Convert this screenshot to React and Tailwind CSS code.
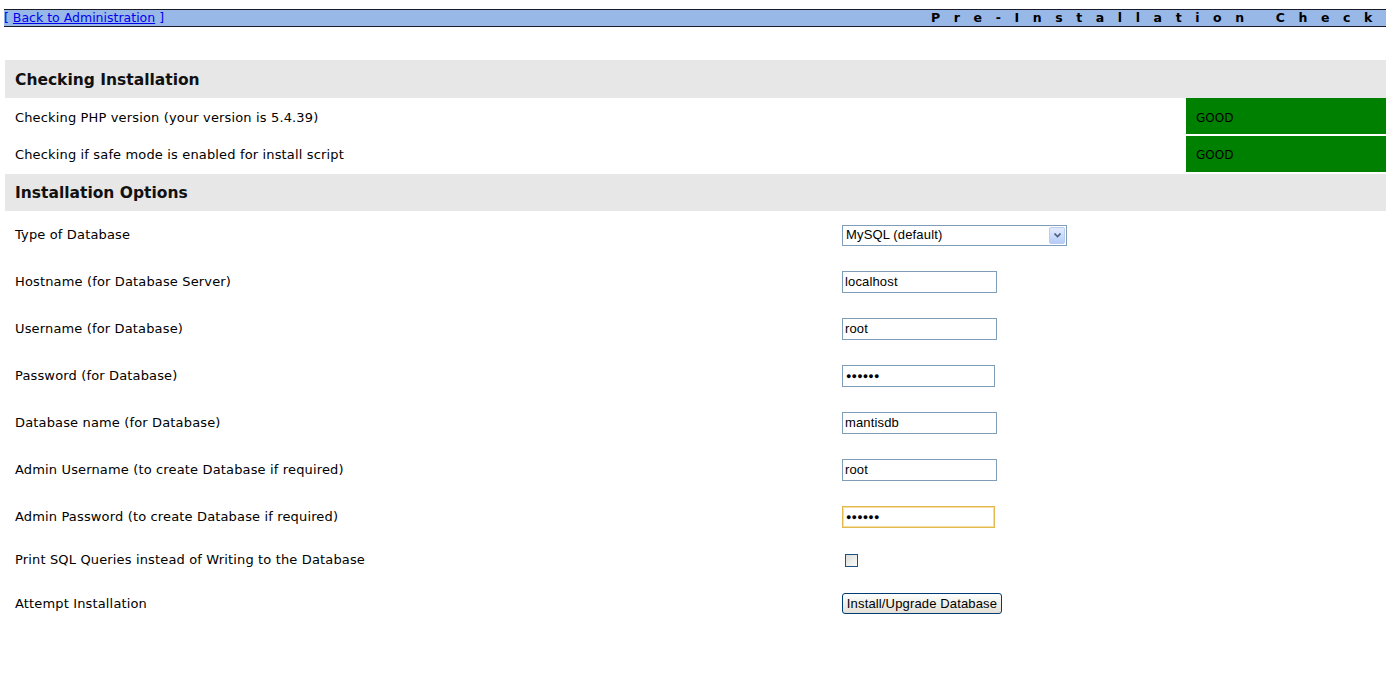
import React from "react";

const optionRows = [
  { label: "Type of Database", kind: "select", h: "h-[47px]" },
  { label: "Hostname (for Database Server)", kind: "text", value: "localhost", h: "h-[47px]" },
  { label: "Username (for Database)", kind: "text", value: "root", h: "h-[47px]" },
  { label: "Password (for Database)", kind: "password", h: "h-[47px]" },
  { label: "Database name (for Database)", kind: "text", value: "mantisdb", h: "h-[47px]" },
  { label: "Admin Username (to create Database if required)", kind: "text", value: "root", h: "h-[47px]" },
  { label: "Admin Password (to create Database if required)", kind: "password", focused: true, h: "h-[47px]" },
  { label: "Print SQL Queries instead of Writing to the Database", kind: "checkbox", h: "h-[39px]" },
  { label: "Attempt Installation", kind: "button", h: "h-[48px]" },
];

function Field({ row }) {
  if (row.kind === "select") {
    return (
      <div className="flex h-[21px] w-[225px] items-center border border-[#7f9db9] bg-white">
        <span className="flex-1 pl-[3px] font-['Liberation_Sans',Arial,sans-serif] text-[13px] text-black">
          MySQL (default)
        </span>
        <span className="mr-[1px] flex h-[17px] w-[16px] items-center justify-center rounded-[2px] border border-[#b9cdf0] bg-gradient-to-b from-[#e3ecfd] to-[#b6cbf6]">
          <svg width="7" height="5" viewBox="0 0 7 5">
            <path d="M0.5 0.5 L3.5 3.5 L6.5 0.5" stroke="#4d6185" strokeWidth="1.6" fill="none" />
          </svg>
        </span>
      </div>
    );
  }
  if (row.kind === "text") {
    return (
      <div className="flex h-[22px] w-[155px] items-center border border-[#7f9db9] bg-white pl-[2px] font-['Liberation_Sans',Arial,sans-serif] text-[13px] text-black">
        {row.value}
      </div>
    );
  }
  if (row.kind === "password") {
    return (
      <div
        className={
          row.focused
            ? "flex h-[22px] w-[153px] items-center border border-[#e3b94f] bg-white pl-[3px] shadow-[inset_0_0_0_1px_#f6df9e]"
            : "flex h-[22px] w-[153px] items-center border border-[#7f9db9] bg-white pl-[3px]"
        }
      >
        <span className="font-['Liberation_Sans',Arial,sans-serif] text-[9px] leading-none text-black">
          ●●●●●●
        </span>
      </div>
    );
  }
  if (row.kind === "checkbox") {
    return (
      <div className="ml-[3px] h-[13px] w-[13px] border border-[#1c5180] bg-gradient-to-br from-[#dcdcd7] to-[#fbfbf9]" />
    );
  }
  return (
    <div className="flex h-[21px] w-[160px] items-center justify-center rounded-[3px] border border-[#003c74] bg-gradient-to-b from-[#fefefe] to-[#e3e1d6] font-['Liberation_Sans',Arial,sans-serif] text-[13px] text-black">
      Install/Upgrade Database
    </div>
  );
}

export default function App() {
  return (
    <div className="min-h-screen bg-white font-['DejaVu_Sans',Verdana,sans-serif] text-[13px] tracking-[0.15px] text-black">
      <div className="pt-[9px] pl-[4px] pr-[9px]">
        {/* top bar */}
        <div className="flex h-[18px] items-center justify-between border-y border-[#1a1a2a] bg-[#98b8e8] pt-[1px]">
          <span className="text-[12.5px] tracking-normal text-[#0000ee]">
            [ <a href="#" className="underline">Back to Administration</a> ]
          </span>
          <span className="text-[12.5px] font-bold tracking-[13.6px] text-black">
            Pre-Installation Check
          </span>
        </div>
      </div>

      <div className="mt-[33px] pl-[5px] pr-[9px]">
        <div className="flex h-[38px] items-center bg-[#e7e7e7] pl-[10px] pt-[3px] text-[15.5px] font-bold tracking-normal text-[#111]">
          Checking Installation
        </div>
        <div className="flex flex-col gap-[2px]">
          <div className="flex h-[36px] items-center">
            <div className="flex-1 pl-[10px] pt-[3px]">Checking PHP version (your version is 5.4.39)</div>
            <div className="flex h-full w-[200px] items-center bg-[#008000] pl-[10px] pt-[3px] text-[12px] tracking-normal">GOOD</div>
          </div>
          <div className="flex h-[36px] items-center">
            <div className="flex-1 pl-[10px] pt-[2px]">Checking if safe mode is enabled for install script</div>
            <div className="flex h-full w-[200px] items-center bg-[#008000] pl-[10px] pt-[2px] text-[12px] tracking-normal">GOOD</div>
          </div>
        </div>
        <div className="mt-[2px] flex h-[37px] items-center bg-[#e7e7e7] pl-[10px] pt-[3px] text-[15.5px] font-bold tracking-normal text-[#111]">
          Installation Options
        </div>
        {optionRows.map((row) => (
          <div key={row.label} className={`grid grid-cols-[837px_1fr] items-center pt-[1px] ${row.h}`}>
            <div className="pl-[10px]">{row.label}</div>
            <div className="flex items-center">
              <Field row={row} />
            </div>
          </div>
        ))}
      </div>
    </div>
  );
}
